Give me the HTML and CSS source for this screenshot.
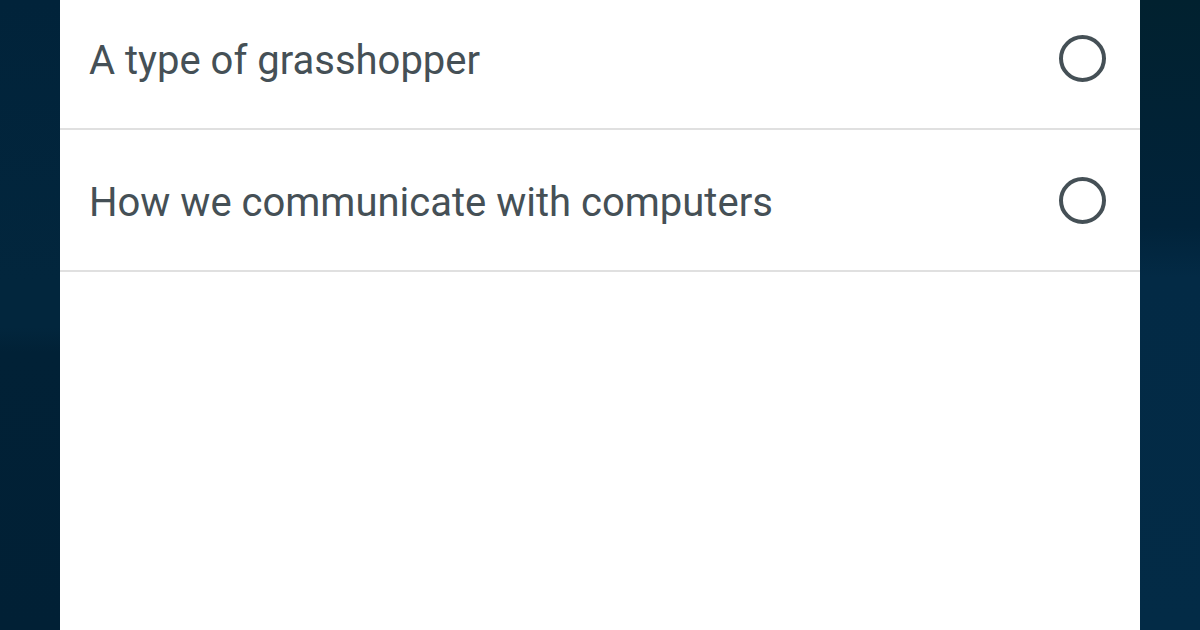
FILE: index.html
```html
<!DOCTYPE html>
<html lang="en">
<head>
  <meta charset="UTF-8">
  <meta name="viewport" content="width=device-width, initial-scale=1">
  <title>Quiz</title>
  <link rel="stylesheet" href="styles.css">
</head>
<body>

<div class="card">
  <ul class="options">
    <li class="option">
      <span class="option-text">A type of grasshopper</span>
      <span class="radio"></span>
    </li>
    <li class="option">
      <span class="option-text">How we communicate with computers</span>
      <span class="radio"></span>
    </li>
  </ul>
</div>

</body>
</html>
```

FILE: styles.css
```css
* {
  box-sizing: border-box;
}
html, body {
  height: 100%;
}
body {
  margin: 0;
  font-family: Roboto, 'Noto Sans', sans-serif;
  background:
    linear-gradient(to bottom, #01233a 0%, #02263d 45%, #02263d 52%, #012136 56%, #012035 100%) left top / 50% 100% no-repeat,
    linear-gradient(to bottom, #01212f 0%, #01233a 36%, #032a45 44%, #032b46 100%) right top / 50% 100% no-repeat;
  overflow: hidden;
}
.card {
  display: flow-root;
  margin: 0 60px;
  height: 100%;
  background: #fff;
}
.options {
  list-style: none;
  margin: -12px 0 0;
  padding: 0;
}
.option {
  display: flex;
  align-items: center;
  justify-content: space-between;
  height: 142px;
  padding: 0 34px 0 29px;
  border-bottom: 2px solid #e0e0e0;
}
.option-text {
  font-size: 40px;
  color: #455056;
  padding-top: 4px;
}
.radio {
  width: 47px;
  height: 47px;
  border: 4.5px solid #455056;
  border-radius: 50%;
}
```
